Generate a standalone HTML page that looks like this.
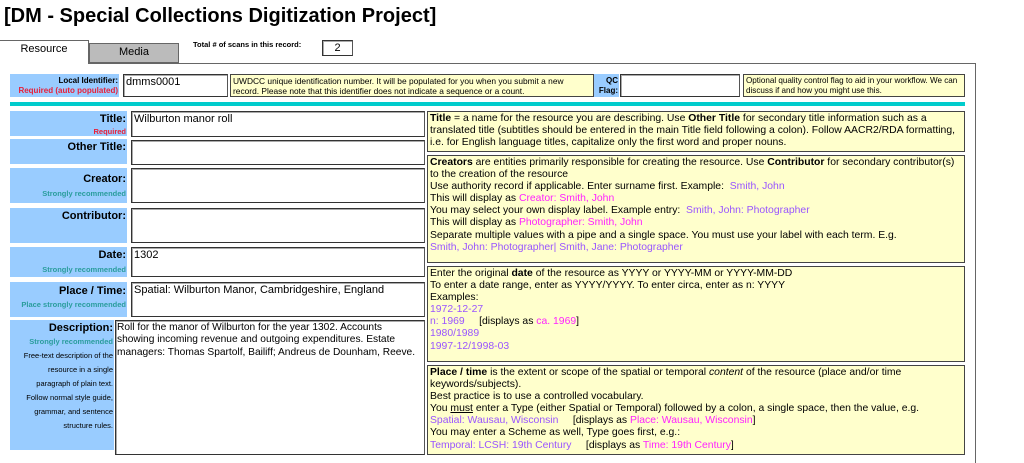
<!DOCTYPE html>
<html><head><meta charset="utf-8"><style>
*{margin:0;padding:0;box-sizing:border-box}
body{width:1024px;height:449px;overflow:hidden;background:#fff;font-family:"Liberation Sans",Arial,sans-serif;position:relative;color:#000}
.a{position:absolute}
.lab{position:absolute;background:#99ccff;text-align:right;padding:2px 1px 0 0;font-weight:bold;font-size:11px;line-height:13px}
.lab .s{display:block;font-size:7.5px;font-weight:bold;line-height:16px}
.g{color:#2a9d9d}.r{color:#e8203a}
.inp{position:absolute;border:1px solid #333;border-right-color:#555;background:#fff;font-size:11px;padding:1px 2px;line-height:13px;box-shadow:inset 1px 1px 0 #aaa}
.help{position:absolute;background:#ffffcc;border:1px solid #444;font-size:10.4px;line-height:12.1px;padding:1px 2px;overflow:hidden;white-space:nowrap}
.p{color:#9955ff}.m{color:#ff22ff}
</style></head><body>
<div class="a" style="left:4px;top:4px;font-size:20px;font-weight:bold;line-height:24px">[DM - Special Collections Digitization Project]</div>
<div class="a" style="left:0;top:40px;width:89px;height:24px;background:#fff;border-top:1px solid #666;border-right:1px solid #666;font-size:11px;text-align:center;line-height:17px;z-index:2">Resource</div>
<div class="a" style="left:89px;top:43px;width:90px;height:20px;background:#bbb;border:1px solid #666;font-size:11px;text-align:center;line-height:17px">Media</div>
<div class="a" style="left:193px;top:40px;font-size:7.5px;font-weight:bold">Total # of scans in this record:</div>
<div class="inp" style="left:322px;top:40px;width:31px;height:16px;text-align:center;font-size:11px;line-height:13px">2</div>
<div class="a" style="left:0;top:63px;width:976px;height:400px;border-top:1px solid #666;border-right:1px solid #666"></div>

<div class="lab" style="left:10px;top:74px;width:109px;height:23px;font-size:8px;line-height:10px;padding-top:2px">Local Identifier:<br><span class="r">Required (auto populated)</span></div>
<div class="inp" style="left:123px;top:74px;width:105px;height:23px">dmms0001</div>
<div class="help" style="left:230px;top:74px;width:364px;height:23px;font-size:8.4px;line-height:10px;white-space:normal">UWDCC unique identification number. It will be populated for you when you submit a new record. Please note that this identifier does not indicate a sequence or a count.</div>
<div class="lab" style="left:594px;top:74px;width:25px;height:23px;font-size:8px;line-height:10px">QC<br>Flag:</div>
<div class="inp" style="left:620px;top:74px;width:120px;height:23px"></div>
<div class="help" style="left:743px;top:74px;width:222px;height:23px;font-size:8.1px;line-height:10px;white-space:normal">Optional quality control flag to aid in your workflow. We can discuss if and how you might use this.</div>
<div class="a" style="left:10px;top:102px;width:955px;height:4px;background:#00cccc"></div>

<div class="lab" style="left:10px;top:111px;width:117px;height:25px">Title:<span class="s r" style="line-height:12px">Required</span></div>
<div class="inp" style="left:131px;top:111px;width:294px;height:26px">Wilburton manor roll</div>
<div class="lab" style="left:10px;top:139px;width:117px;height:25px">Other Title:</div>
<div class="inp" style="left:131px;top:140px;width:294px;height:25px"></div>
<div class="lab" style="left:10px;top:168px;width:117px;height:35px;padding-top:5px">Creator:<span class="s g">Strongly recommended</span></div>
<div class="inp" style="left:131px;top:168px;width:294px;height:35px"></div>
<div class="lab" style="left:10px;top:208px;width:117px;height:35px">Contributor:</div>
<div class="inp" style="left:131px;top:208px;width:294px;height:35px"></div>
<div class="lab" style="left:10px;top:247px;width:117px;height:30px">Date:<span class="s g">Strongly recommended</span></div>
<div class="inp" style="left:131px;top:247px;width:294px;height:30px">1302</div>
<div class="lab" style="left:10px;top:282px;width:117px;height:35px;padding-top:3px">Place / Time:<span class="s g" style="line-height:14px">Place strongly recommended</span></div>
<div class="inp" style="left:131px;top:282px;width:294px;height:35px">Spatial: Wilburton Manor, Cambridgeshire, England</div>
<div class="lab" style="left:10px;top:320px;width:104px;height:130px">Description:<span class="s g" style="line-height:14px">Strongly recommended</span><span style="display:block;font-size:7.5px;font-weight:normal;line-height:14px">Free-text description of the<br>resource in a single<br>paragraph of plain text.<br>Follow normal style guide,<br>grammar, and sentence<br>structure rules.</span></div>
<div class="inp" style="left:115px;top:320px;width:310px;height:135px;line-height:12.3px;white-space:nowrap;overflow:hidden;font-size:10.2px;padding-left:1px">Roll for the manor of Wilburton for the year 1302. Accounts<br>showing incoming revenue and outgoing expenditures. Estate<br>managers: Thomas Spartolf, Bailiff; Andreus de Dounham, Reeve.</div>

<div class="help" style="left:427px;top:111px;width:538px;height:41px"><b>Title</b> = a name for the resource you are describing. Use <b>Other Title</b> for secondary title information such as a<br>translated title (subtitles should be entered in the main Title field following a colon). Follow AACR2/RDA formatting,<br>i.e. for English language titles, capitalize only the first word and proper nouns.</div>
<div class="help" style="left:427px;top:155px;width:538px;height:108px"><b>Creators</b> are entities primarily responsible for creating the resource. Use <b>Contributor</b> for secondary contributor(s)<br>to the creation of the resource<br>Use authority record if applicable. Enter surname first. Example:&nbsp; <span class="p">Smith, John</span><br>This will display as <span class="m">Creator: Smith, John</span><br>You may select your own display label. Example entry:&nbsp; <span class="p">Smith, John: Photographer</span><br>This will display as <span class="m">Photographer: Smith, John</span><br>Separate multiple values with a pipe and a single space. You must use your label with each term. E.g.<br><span class="p">Smith, John: Photographer| Smith, Jane: Photographer</span></div>
<div class="help" style="left:427px;top:266px;width:538px;height:96px">Enter the original <b>date</b> of the resource as YYYY or YYYY-MM or YYYY-MM-DD<br>To enter a date range, enter as YYYY/YYYY. To enter circa, enter as n: YYYY<br>Examples:<br><span class="p">1972-12-27</span><br><span class="p">n: 1969</span>&nbsp;&nbsp;&nbsp;&nbsp; [displays as <span class="m">ca. 1969</span>]<br><span class="p">1980/1989</span><br><span class="p">1997-12/1998-03</span></div>
<div class="help" style="left:427px;top:365px;width:538px;height:90px"><b>Place / time</b> is the extent or scope of the spatial or temporal <i>content</i> of the resource (place and/or time<br>keywords/subjects).<br>Best practice is to use a controlled vocabulary.<br>You <u>must</u> enter a Type (either Spatial or Temporal) followed by a colon, a single space, then the value, e.g.<br><span class="p">Spatial: Wausau, Wisconsin</span>&nbsp;&nbsp;&nbsp;&nbsp; [displays as <span class="m">Place: Wausau, Wisconsin</span>]<br>You may enter a Scheme as well, Type goes first, e.g.:<br><span class="p">Temporal: LCSH: 19th Century</span>&nbsp;&nbsp;&nbsp;&nbsp; [displays as <span class="m">Time: 19th Century</span>]</div>
</body></html>
